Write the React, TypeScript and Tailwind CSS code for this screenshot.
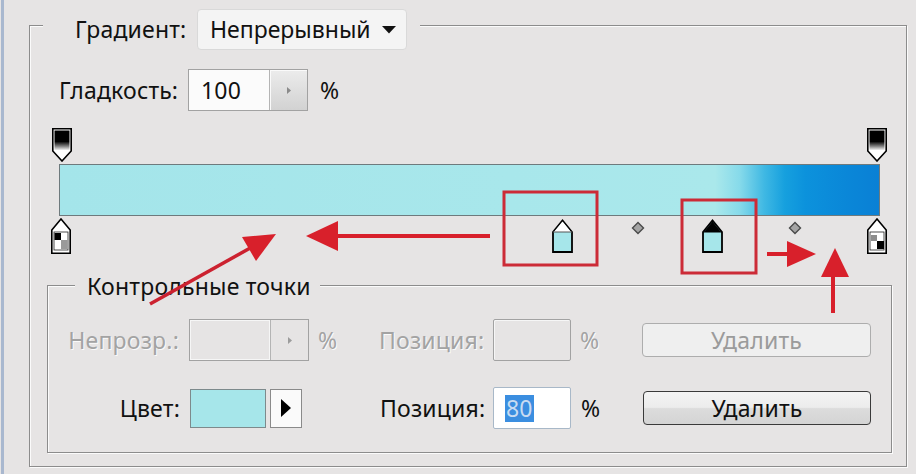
import React from "react";

const BG = "bg-[#e6e4e4]";

function Spin({ value, disabled }: { value?: string; disabled?: boolean }) {
  return (
    <div className="flex w-[120px] h-[42px] border border-[#a2a2a2]">
      <div
        className={`w-[80px] h-full flex items-center pl-[12px] ${
          disabled ? "bg-[#e6e4e4] shadow-[inset_1px_1px_0_#f6f6f6,inset_-1px_-1px_0_#f6f6f6]" : "bg-[#fbfbfb]"
        }`}
      >
        {value}
      </div>
      <div
        className={`flex-1 border-l border-[#b4b4b4] flex items-center justify-center ${
          disabled
            ? "bg-[#e6e4e4]"
            : "bg-gradient-to-b from-[#ececec] to-[#d2d2d2] shadow-[inset_1px_1px_0_#fafafa]"
        }`}
      >
        <svg width="6" height="9" viewBox="0 0 6 9">
          <path d="M1 1 L5 4.5 L1 8 Z" fill={disabled ? "#9c9c9c" : "#8a8a8a"} />
        </svg>
      </div>
    </div>
  );
}

function TopStop() {
  return (
    <svg width="20" height="34" viewBox="0 0 20 34">
      <defs>
        <linearGradient id="ts" x1="0" y1="0" x2="0" y2="1">
          <stop offset="0" stopColor="#000" />
          <stop offset="0.55" stopColor="#000" />
          <stop offset="0.8" stopColor="#888" />
          <stop offset="1" stopColor="#fff" />
        </linearGradient>
      </defs>
      <path d="M0.8 0.8 H19.2 V23 L10 33 L0.8 23 Z" fill="#fff" stroke="#000" strokeWidth="1.6" />
      <rect x="2.5" y="2.5" width="15" height="20" fill="url(#ts)" />
    </svg>
  );
}

function CheckStop({ flip }: { flip?: boolean }) {
  return (
    <svg width="20" height="36" viewBox="0 0 20 36">
      <path d="M0.8 35.2 V12 L10 1 L19.2 12 V35.2 Z" fill="#fff" stroke="#000" strokeWidth="1.6" />
      <rect x="3" y="14" width="14" height="18" fill="#fff" stroke="#222" strokeWidth="0.8" />
      {flip ? (
        <>
          <rect x="4" y="17" width="6" height="6" fill="#8c8c8c" />
          <rect x="10" y="23" width="7" height="8" fill="#000" />
        </>
      ) : (
        <>
          <rect x="3.5" y="15" width="6.5" height="7" fill="#000" />
          <rect x="10" y="22" width="6.5" height="9" fill="#9a9a9a" />
        </>
      )}
    </svg>
  );
}

function ColorStop({ selected }: { selected?: boolean }) {
  return (
    <svg width="21" height="34" viewBox="0 0 21 34">
      <path d="M1 33 V13 L10.5 1.5 L20 13 V33 Z" fill="#a6e6ea" stroke="#000" strokeWidth="1.8" />
      <path d="M1.9 13 L10.5 2.6 L19.1 13 Z" fill={selected ? "#000" : "#fff"} />
      <line x1="1" y1="13" x2="20" y2="13" stroke={selected ? "#000" : "#555"} strokeWidth="1" />
    </svg>
  );
}

function Diamond() {
  return (
    <svg width="14" height="14" viewBox="0 0 14 14">
      <path d="M7 1.5 L12.5 7 L7 12.5 L1.5 7 Z" fill="#a4a4a4" stroke="#4a4a4a" strokeWidth="1.4" />
    </svg>
  );
}

function Overlay() {
  const red = "#d8202b";
  return (
    <svg className="absolute inset-0 pointer-events-none" width="916" height="474" viewBox="0 0 916 474">
      <rect x="504" y="192" width="93" height="73" fill="none" stroke="#cc2b37" strokeWidth="3" />
      <rect x="682" y="200" width="74" height="73" fill="none" stroke="#cc2b37" strokeWidth="3" />
      <line x1="490" y1="236" x2="334" y2="236" stroke={red} strokeWidth="4" />
      <polygon points="306,236 338,221 338,251" fill={red} />
      <line x1="150" y1="304" x2="252" y2="247" stroke="#cc2230" strokeWidth="3.5" />
      <polygon points="276,234 242,237 256,261" fill={red} />
      <line x1="767" y1="254" x2="792" y2="254" stroke={red} strokeWidth="4" />
      <polygon points="816,254 787,241 787,267" fill={red} />
      <line x1="833" y1="313" x2="833" y2="274" stroke={red} strokeWidth="4" />
      <polygon points="835,248 821,277 849,277" fill={red} />
    </svg>
  );
}

export default function App() {
  return (
    <div
      className={`relative w-[916px] h-[474px] overflow-hidden ${BG} flex items-start text-[23px] tracking-[0.2px] text-[#111] leading-none`}
      style={{ fontFamily: '"Noto Sans", "DejaVu Sans", sans-serif' }}
    >
      <div className="w-[3px] h-full ml-[1px] bg-[#a9b8cf] shrink-0" />
      {/* outer group */}
      <div className="ml-[25px] mt-[25px] w-[878px] h-[442px] shrink-0 border border-[#8c8c8c] shadow-[inset_1px_1px_0_#fbfbfb,1px_1px_0_#fbfbfb] flex flex-col">
        {/* header */}
        <div className={`-mt-[17px] ml-[13px] w-[377px] h-[41px] ${BG} flex items-center pl-[32px]`}>
          <div className="w-[113px] whitespace-nowrap">Градиент:</div>
          <div className="ml-[9px] w-[210px] h-[41px] bg-[#f4f4f4] border border-[#d9d9d9] rounded-[4px] flex items-center pl-[12px] pr-[10px] justify-between">
            <span className="whitespace-nowrap tracking-normal">Непрерывный</span>
            <svg width="14" height="8" viewBox="0 0 14 8">
              <path d="M0 0 H14 L7 7.5 Z" fill="#111" />
            </svg>
          </div>
        </div>
        {/* smoothness */}
        <div className="mt-[19px] h-[42px] flex items-center">
          <div className="ml-[29px] w-[121px] whitespace-nowrap">Гладкость:</div>
          <div className="ml-[8px]">
            <Spin value="100" />
          </div>
          <div className="ml-[12px]">%</div>
        </div>
        {/* gradient widget */}
        <div className="mt-[17px] h-[128px] relative shrink-0">
          <div className="ml-[29px] mt-[36px] w-[821px] h-[52px] border border-[#6e7a7d] bg-[linear-gradient(to_right,#a4e5ea_0%,#a8e7eb_55%,#aae8eb_80%,#86daea_83%,#3fb8e3_86%,#16a0de_88.5%,#0c92dc_91%,#0a87d8_96%,#0a80d5_100%)]" />
          <div className="absolute left-[22px] top-0">
            <TopStop />
          </div>
          <div className="absolute left-[837px] top-0">
            <TopStop />
          </div>
          <div className="absolute left-[21px] top-[90px]">
            <CheckStop />
          </div>
          <div className="absolute left-[837px] top-[90px]">
            <CheckStop flip />
          </div>
          <div className="absolute left-[522px] top-[91px]">
            <ColorStop />
          </div>
          <div className="absolute left-[672px] top-[91px]">
            <ColorStop selected />
          </div>
          <div className="absolute left-[601px] top-[93px]">
            <Diamond />
          </div>
          <div className="absolute left-[758px] top-[93px]">
            <Diamond />
          </div>
        </div>
        {/* inner group */}
        <div className="mt-[29px] ml-[17px] w-[845px] h-[168px] shrink-0 border border-[#8c8c8c] shadow-[inset_1px_1px_0_#fbfbfb,1px_1px_0_#fbfbfb] flex flex-col">
          <div className={`-mt-[14px] ml-[27px] w-[245px] h-[28px] ${BG} flex items-center pl-[12px] whitespace-nowrap`}>
            Контрольные точки
          </div>
          {/* row 1 disabled */}
          <div className="mt-[19px] h-[42px] flex items-center text-[#a3a3a3] [text-shadow:1px_1px_0_#fafafa]">
            <div className="w-[131px] text-right whitespace-nowrap">Непрозр.:</div>
            <div className="ml-[10px] [text-shadow:none]">
              <Spin disabled />
            </div>
            <div className="w-[70px] pl-[9px]">%</div>
            <div className="w-[105px] whitespace-nowrap">Позиция:</div>
            <div className="ml-[9px] w-[78px] h-[42px] border border-[#a2a2a2] rounded-[2px] shadow-[inset_1px_1px_0_#f6f6f6]" />
            <div className="w-[71px] pl-[9px]">%</div>
            <div className="w-[229px] h-[34px] border border-[#adadad] rounded-[4px] bg-[#efefef] flex items-center justify-center [text-shadow:none] text-[#9b9b9b]">
              Удалить
            </div>
          </div>
          {/* row 2 */}
          <div className="mt-[26px] h-[42px] flex items-center">
            <div className="w-[132px] text-right whitespace-nowrap">Цвет:</div>
            <div className="ml-[10px] w-[76px] h-[39px] bg-[#a6e6ea] border border-[#7d8a8c]" />
            <div className="ml-[4px] w-[32px] h-[39px] bg-[#fafafa] border border-[#8a8a8a] flex items-center justify-center">
              <svg width="12" height="20" viewBox="0 0 12 20">
                <path d="M1 1 L11 10 L1 19 Z" fill="#000" />
              </svg>
            </div>
            <div className="w-[78px]" />
            <div className="w-[104px] whitespace-nowrap">Позиция:</div>
            <div className="ml-[9px] w-[78px] h-[42px] bg-white border border-[#a8b8c8] rounded-[2px] flex items-center pl-[11px]">
              <span className="bg-[#3b8ee0] text-[#c8dcf2] px-[1px] h-[27px] flex items-center">80</span>
            </div>
            <div className="w-[72px] pl-[10px]">%</div>
            <div className="w-[228px] h-[34px] border border-[#3a3a3a] rounded-[4px] bg-[linear-gradient(to_bottom,#f4f4f4_0%,#ececec_48%,#dcdcdc_52%,#d4d4d4_100%)] flex items-center justify-center">
              Удалить
            </div>
          </div>
        </div>
      </div>
      <Overlay />
    </div>
  );
}
